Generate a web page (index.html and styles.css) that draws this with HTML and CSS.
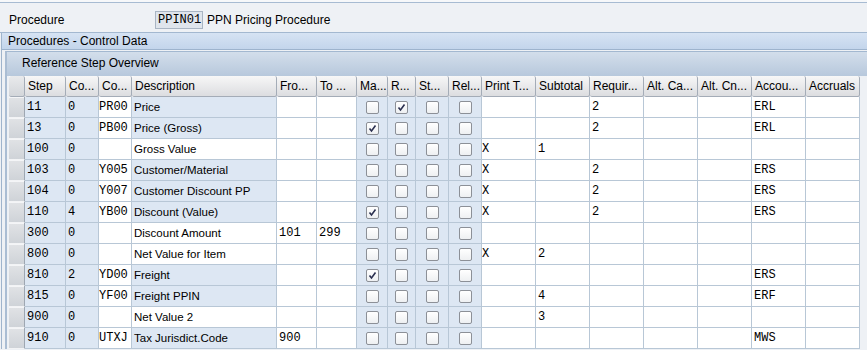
FILE: index.html
```html
<!DOCTYPE html>
<html>
<head>
    <meta charset="UTF-8">
    <title>Procedures - Control Data</title>
    <link rel="stylesheet" href="styles.css">
</head>
<body>
    <div class="topstrip"></div>
    <div class="procrow">
        <span class="proclabel">Procedure</span>
        <span class="procfield">PPIN01</span>
        <span class="proctext">PPN Pricing Procedure</span>
    </div>

    <div class="group">
        <div class="grouptitle">Procedures - Control Data</div>
        <div class="frame">
            <div class="frametitle">Reference Step Overview</div>
            <table class="grid">
                <colgroup>
                    <col style="width:16px"><col style="width:41px"><col style="width:33px"><col style="width:33px">
                    <col style="width:145px"><col style="width:40px"><col style="width:40px"><col style="width:31px">
                    <col style="width:28px"><col style="width:33px"><col style="width:33px"><col style="width:54px">
                    <col style="width:54px"><col style="width:54px"><col style="width:54px"><col style="width:54px">
                    <col style="width:54px"><col style="width:54px">
                </colgroup>
                <thead>
                    <tr>
                        <th class="sel"></th>
                        <th>Step</th><th>Co...</th><th>Co...</th><th>Description</th>
                        <th>Fro...</th><th>To ...</th><th>Ma...</th><th>R...</th><th>St...</th><th>Rel...</th>
                        <th>Print T...</th><th>Subtotal</th><th>Requir...</th><th>Alt. Ca...</th><th>Alt. Cn...</th>
                        <th>Accou...</th><th>Accruals</th>
                    </tr>
                </thead>
                <tbody id="rows"></tbody>
            </table>
        </div>
    </div>

    <script>
        // step, counter, cond. type, description, desc locked, from, to, checks, print, subtotal, requirement, account key
        let steps = [
            ['11', '0', 'PR00', 'Price', true, '', '', [0, 1, 0, 0], '', '', '2', 'ERL'],
            ['13', '0', 'PB00', 'Price (Gross)', true, '', '', [1, 0, 0, 0], '', '', '2', 'ERL'],
            ['100', '0', '', 'Gross Value', false, '', '', [0, 0, 0, 0], 'X', '1', '', ''],
            ['103', '0', 'Y005', 'Customer/Material', true, '', '', [0, 0, 0, 0], 'X', '', '2', 'ERS'],
            ['104', '0', 'Y007', 'Customer Discount PP', true, '', '', [0, 0, 0, 0], 'X', '', '2', 'ERS'],
            ['110', '4', 'YB00', 'Discount (Value)', true, '', '', [1, 0, 0, 0], 'X', '', '2', 'ERS'],
            ['300', '0', '', 'Discount Amount', false, '101', '299', [0, 0, 0, 0], '', '', '', ''],
            ['800', '0', '', 'Net Value for Item', false, '', '', [0, 0, 0, 0], 'X', '2', '', ''],
            ['810', '2', 'YD00', 'Freight', true, '', '', [1, 0, 0, 0], '', '', '', 'ERS'],
            ['815', '0', 'YF00', 'Freight PPIN', true, '', '', [0, 0, 0, 0], '', '4', '', 'ERF'],
            ['900', '0', '', 'Net Value 2', false, '', '', [0, 0, 0, 0], '', '3', '', ''],
            ['910', '0', 'UTXJ', 'Tax Jurisdict.Code', true, '900', '', [0, 0, 0, 0], '', '', '', 'MWS']
        ];

        const tick = '<svg width="11" height="11" viewBox="0 0 11 11"><path d="M2.5 5.5 L4.5 8 L8.5 2.5" fill="none" stroke="#2b3050" stroke-width="1.6"/></svg>';

        function box(on) {
            return `<td class="key chk"><span class="cb">${on ? tick : ''}</span></td>`;
        }

        let html = '';
        for (let s of steps) {
            html += '<tr>';
            html += '<td class="sel"><span class="selbtn"></span></td>';
            html += `<td class="key mono">${s[0]}</td>`;
            html += `<td class="key mono">${s[1]}</td>`;
            html += `<td class="mono flush">${s[2]}</td>`;
            html += `<td class="${s[4] ? 'key' : ''}">${s[3]}</td>`;
            html += `<td class="mono">${s[5]}</td>`;
            html += `<td class="mono">${s[6]}</td>`;
            html += s[7].map(v => box(v)).join('');
            html += `<td class="mono flush">${s[8]}</td>`;
            html += `<td class="mono">${s[9]}</td>`;
            html += `<td class="mono">${s[10]}</td>`;
            html += '<td></td><td></td>';
            html += `<td class="mono">${s[11]}</td>`;
            html += '<td></td>';
            html += '</tr>';
        }
        document.getElementById('rows').innerHTML = html;
    </script>
</body>
</html>
```

FILE: styles.css
```css
* {
    box-sizing: border-box;
}

body {
    margin: 0;
    background: #eef1f5;
    font-family: "Liberation Sans", Arial, sans-serif;
    font-size: 12px;
    color: #000;
    overflow: hidden;
}

.topstrip {
    height: 3px;
    background: #f6f8fa;
    border-bottom: 1px solid #a7bbd2;
}

.procrow {
    height: 30px;
    padding: 5px 0 0 9px;
    display: flex;
    align-items: center;
    border-bottom: 1px solid #a3b8d0;
}

.proclabel {
    width: 146px;
}

.procfield {
    height: 18px;
    width: 48px;
    line-height: 16px;
    padding-left: 2px;
    border: 1px solid #a9b5c3;
    background: #dfe5ec;
    font-family: "Liberation Mono", "Courier New", monospace;
    font-size: 12px;
}

.proctext {
    padding-left: 4px;
}

.group {
    margin-left: 1px;
    border-left: 1px solid #9fb4cc;
}

.grouptitle {
    height: 17px;
    line-height: 16px;
    padding-left: 6px;
    background: linear-gradient(#d6e3f3, #c3d5eb);
    border-bottom: 1px solid #9db3cd;
}

.frame {
    margin: 1px 0 0 3px;
    border-top: 1px solid #a3b8d0;
    border-left: 2px solid #aabdd3;
}

.frametitle {
    height: 24px;
    line-height: 23px;
    padding-left: 15px;
    background: linear-gradient(#d3deeb, #b7c8dc);
}

.grid {
    margin-left: 2px;
    width: 851px;
    table-layout: fixed;
    border-collapse: separate;
    border-spacing: 0;
    background: #fff;
}

.grid th {
    height: 21px;
    padding: 0 0 0 3px;
    font-weight: normal;
    text-align: left;
    white-space: nowrap;
    overflow: hidden;
    background: linear-gradient(#f7f7f7, #dcdde0);
    border-right: 1px solid #a4acb7;
    border-bottom: 1px solid #a4acb7;
    border-radius: 2px;
}

.grid td {
    height: 21px;
    padding: 0 0 0 2px;
    white-space: nowrap;
    overflow: hidden;
    font-size: 11.5px;
    border-right: 1px solid #b8c7d6;
    border-bottom: 1px solid #b8c7d6;
}

.grid td.key {
    background: #dde7f3;
}

.grid td.mono {
    font-family: "Liberation Mono", "Courier New", monospace;
    font-size: 12px;
}

.grid td.flush {
    padding-left: 0;
}

.grid th.sel {
    padding: 0;
    background: linear-gradient(#e9eaec, #d3d6da);
}

.grid td.sel {
    padding: 0;
    background: #eef0f3;
    border-right: 1px solid #9ea7b2;
    border-bottom: 1px solid #f2f3f5;
}

.selbtn {
    display: block;
    height: 20px;
    background: linear-gradient(#e0e2e5, #cfd3d8);
    border-top: 1px solid #f4f5f7;
}

.grid td.chk {
    padding: 0;
    text-align: center;
}

.cb {
    display: inline-block;
    width: 13px;
    height: 13px;
    margin-top: 1px;
    vertical-align: middle;
    border: 1px solid #8c9097;
    border-radius: 2px;
    background: linear-gradient(#ffffff, #eef0f2);
    line-height: 0;
}
```
